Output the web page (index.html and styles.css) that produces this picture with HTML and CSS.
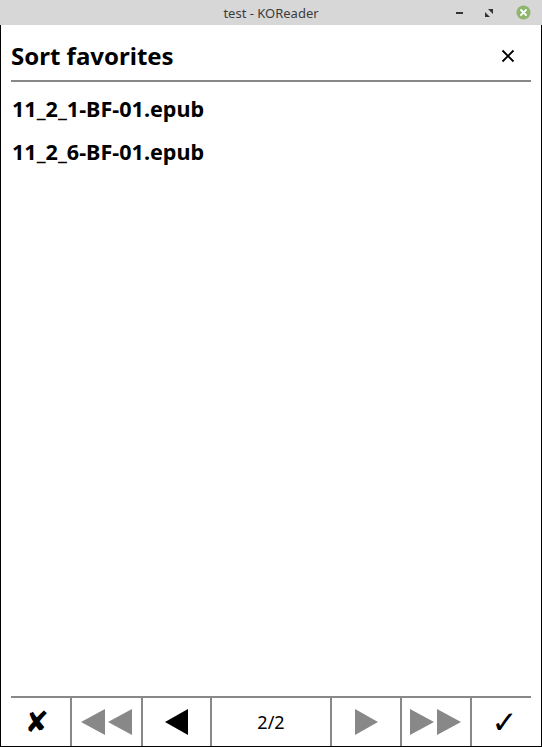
FILE: index.html
```html
<!DOCTYPE html>
<html lang="en">
<head>
    <meta charset="UTF-8">
    <meta name="viewport" content="width=device-width, initial-scale=1.0">
    <title>test - KOReader</title>
    <link rel="stylesheet" href="styles.css">
</head>
<body>
    <div class="titlebar">
        <span class="titlebar-text">test - KOReader</span>
        <div class="win-buttons">
            <span class="win-min"></span>
            <svg class="win-max" width="8" height="8" viewBox="0 0 8 8">
                <path d="M0 8 L0 3 L5 8 Z M8 0 L8 5 L3 0 Z" fill="#333"/>
            </svg>
            <svg class="win-close" width="15" height="15" viewBox="0 0 15 15">
                <circle cx="7.5" cy="7.5" r="7" fill="#8db66c"/>
                <path d="M5 5 L10 10 M10 5 L5 10" stroke="#fff" stroke-width="1.8" stroke-linecap="round"/>
            </svg>
        </div>
    </div>

    <div class="window">
        <div class="header">
            <h1 class="title">Sort favorites</h1>
            <svg class="close" width="14" height="14" viewBox="0 0 14 14">
                <path d="M1.5 1.5 L12.5 12.5 M12.5 1.5 L1.5 12.5" stroke="#000" stroke-width="1.8"/>
            </svg>
        </div>

        <ul class="items">
            <li class="item">11_2_1-BF-01.epub</li>
            <li class="item">11_2_6-BF-01.epub</li>
        </ul>

        <div class="footer">
            <div class="btn w59"><span class="glyph cross">✘</span></div>
            <div class="btn w71">
                <svg width="52" height="26" viewBox="0 0 52 26">
                    <polygon points="24,0 24,26 0,13" fill="#888"/>
                    <polygon points="51,0 51,26 27,13" fill="#888"/>
                </svg>
            </div>
            <div class="btn w69">
                <svg width="23" height="26" viewBox="0 0 23 26">
                    <polygon points="23,0 23,26 0,13" fill="#000"/>
                </svg>
            </div>
            <div class="btn w120"><span class="page">2/2</span></div>
            <div class="btn w70">
                <svg width="23" height="26" viewBox="0 0 23 26">
                    <polygon points="0,0 0,26 23,13" fill="#888"/>
                </svg>
            </div>
            <div class="btn w70">
                <svg width="52" height="26" viewBox="0 0 52 26">
                    <polygon points="0,0 0,26 24,13" fill="#888"/>
                    <polygon points="27,0 27,26 51,13" fill="#888"/>
                </svg>
            </div>
            <div class="btn w61"><span class="glyph check">✓</span></div>
        </div>
    </div>
</body>
</html>
```

FILE: styles.css
```css
* {
    box-sizing: border-box;
    margin: 0;
    padding: 0;
}

body {
    display: flex;
    flex-direction: column;
    height: 747px;
    background-color: #fff;
    font-family: "Noto Sans", sans-serif;
}

.titlebar {
    position: relative;
    height: 25px;
    flex-shrink: 0;
    background-color: #d7d7d7;
    display: flex;
    justify-content: center;
    align-items: center;
}

.titlebar-text {
    font-size: 13px;
    color: #3c3c3c;
}

.win-buttons {
    position: absolute;
    right: 11px;
    top: 5px;
    display: flex;
    align-items: center;
}

.win-min {
    width: 7px;
    height: 2px;
    background-color: #333;
    margin-right: 22px;
}

.win-max {
    margin-right: 23px;
}

.window {
    flex: 1;
    display: flex;
    flex-direction: column;
    border-left: 1px solid #000;
    border-right: 1px solid #000;
    border-bottom: 1px solid #000;
    padding: 0 10px;
}

.header {
    height: 57px;
    display: flex;
    align-items: center;
    justify-content: space-between;
    border-bottom: 2px solid #888;
    padding-top: 5px;
}

.title {
    font-size: 24px;
    font-weight: bold;
    color: #000;
}

.close {
    margin-right: 16px;
    margin-top: 1px;
}

.items {
    list-style: none;
    padding-top: 5px;
}

.item {
    height: 43px;
    display: flex;
    align-items: center;
    padding-left: 1px;
    font-size: 21.6px;
    font-weight: bold;
    color: #000;
}

.footer {
    margin-top: auto;
    height: 50px;
    display: flex;
    border-top: 2px solid #888;
}

.btn {
    display: flex;
    justify-content: center;
    align-items: center;
    border-left: 2px solid #888;
}

.btn:first-child {
    border-left: none;
}

.w59 { width: 59px; }
.w71 { width: 71px; }
.w69 { width: 69px; }
.w120 { width: 120px; }
.w70 { width: 70px; }
.w61 { width: 61px; }

.glyph {
    font-family: "DejaVu Sans", sans-serif;
    font-size: 29px;
    line-height: 1;
    color: #000;
}

.cross {
    margin-right: 7px;
}

.check {
    font-size: 31px;
    margin-left: 6px;
}

.page {
    font-size: 18px;
    color: #000;
}
```
